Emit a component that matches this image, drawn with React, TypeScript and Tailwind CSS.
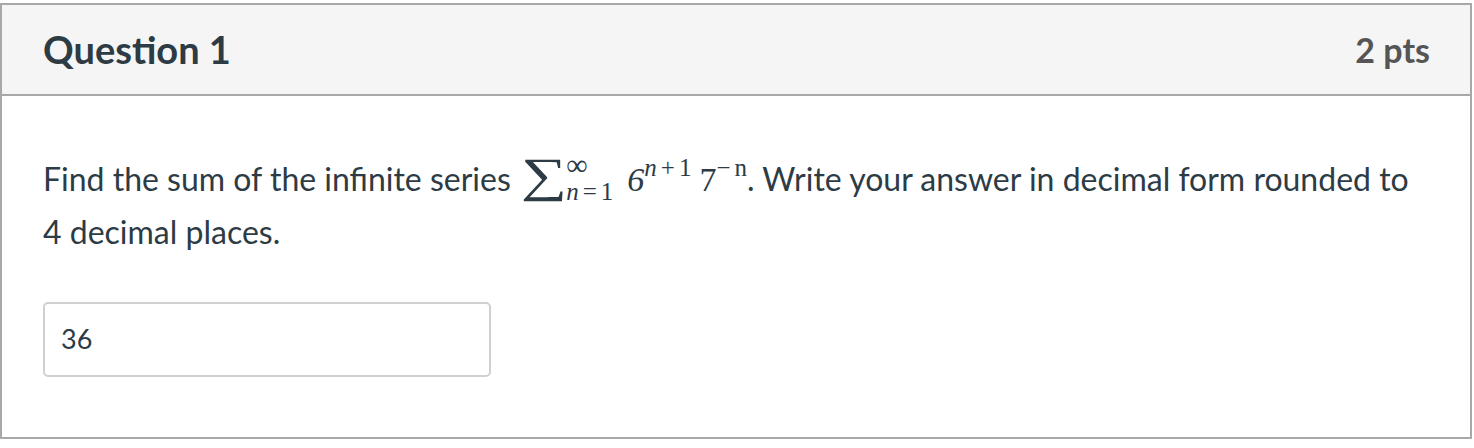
export default function App() {
  return (
    <div className="h-[448px] w-[1474px] bg-white pt-[3px] font-['Lato',sans-serif]">
      <div className="w-[1472px] border-2 border-[#a8a8a8]">
        <div className="flex h-[91px] items-center justify-between border-b-2 border-[#a8a8a8] bg-[#f5f5f5] pl-[41px] pr-[40px]">
          <h2 className="text-[38px] font-bold text-[#2d3b45]">Question 1</h2>
          <div className="text-[34px] font-bold text-[#555555]">2 pts</div>
        </div>
        <div className="h-[341px] pl-[41px] pr-[50px] pt-[54px]">
          <p className="text-[32px] leading-[51px] text-[#2d3b45]">
            Find the sum of the infinite series{" "}
            <span className="font-['Liberation_Serif',serif] text-[#2d3b45]">
              <span className="ml-[8px] mr-[5px] inline-block scale-x-[1.35] text-[48px] leading-[0]">
                ∑
              </span>
              <span className="inline-flex flex-col items-start align-[16px] text-[25px] leading-[23px]">
                <span>
                  <span className="text-[30px] leading-none">∞</span>
                </span>
                <span>
                  <i>n</i>
                  <span className="mx-[4px]">=</span>1
                </span>
              </span>
              <i className="ml-[14px] text-[34px] leading-none">6</i>
              <span className="align-[15px] text-[25px] leading-none">
                <i>n</i>
                <span className="mx-[4px]">+</span>1
              </span>
              <span className="ml-[8px] text-[34px] leading-none">7</span>
              <span className="align-[15px] text-[25px] leading-none">
                <span className="mr-[4px]">−</span>n
              </span>
            </span>
            . Write your answer in decimal form rounded to 4 decimal places.
          </p>
          <div className="mt-[45px] flex h-[75px] w-[448px] items-center rounded-[5px] border-2 border-[#d0d0d0] pl-[16px] text-[27px] text-[#2d3b45]">
            36
          </div>
        </div>
      </div>
    </div>
  );
}
